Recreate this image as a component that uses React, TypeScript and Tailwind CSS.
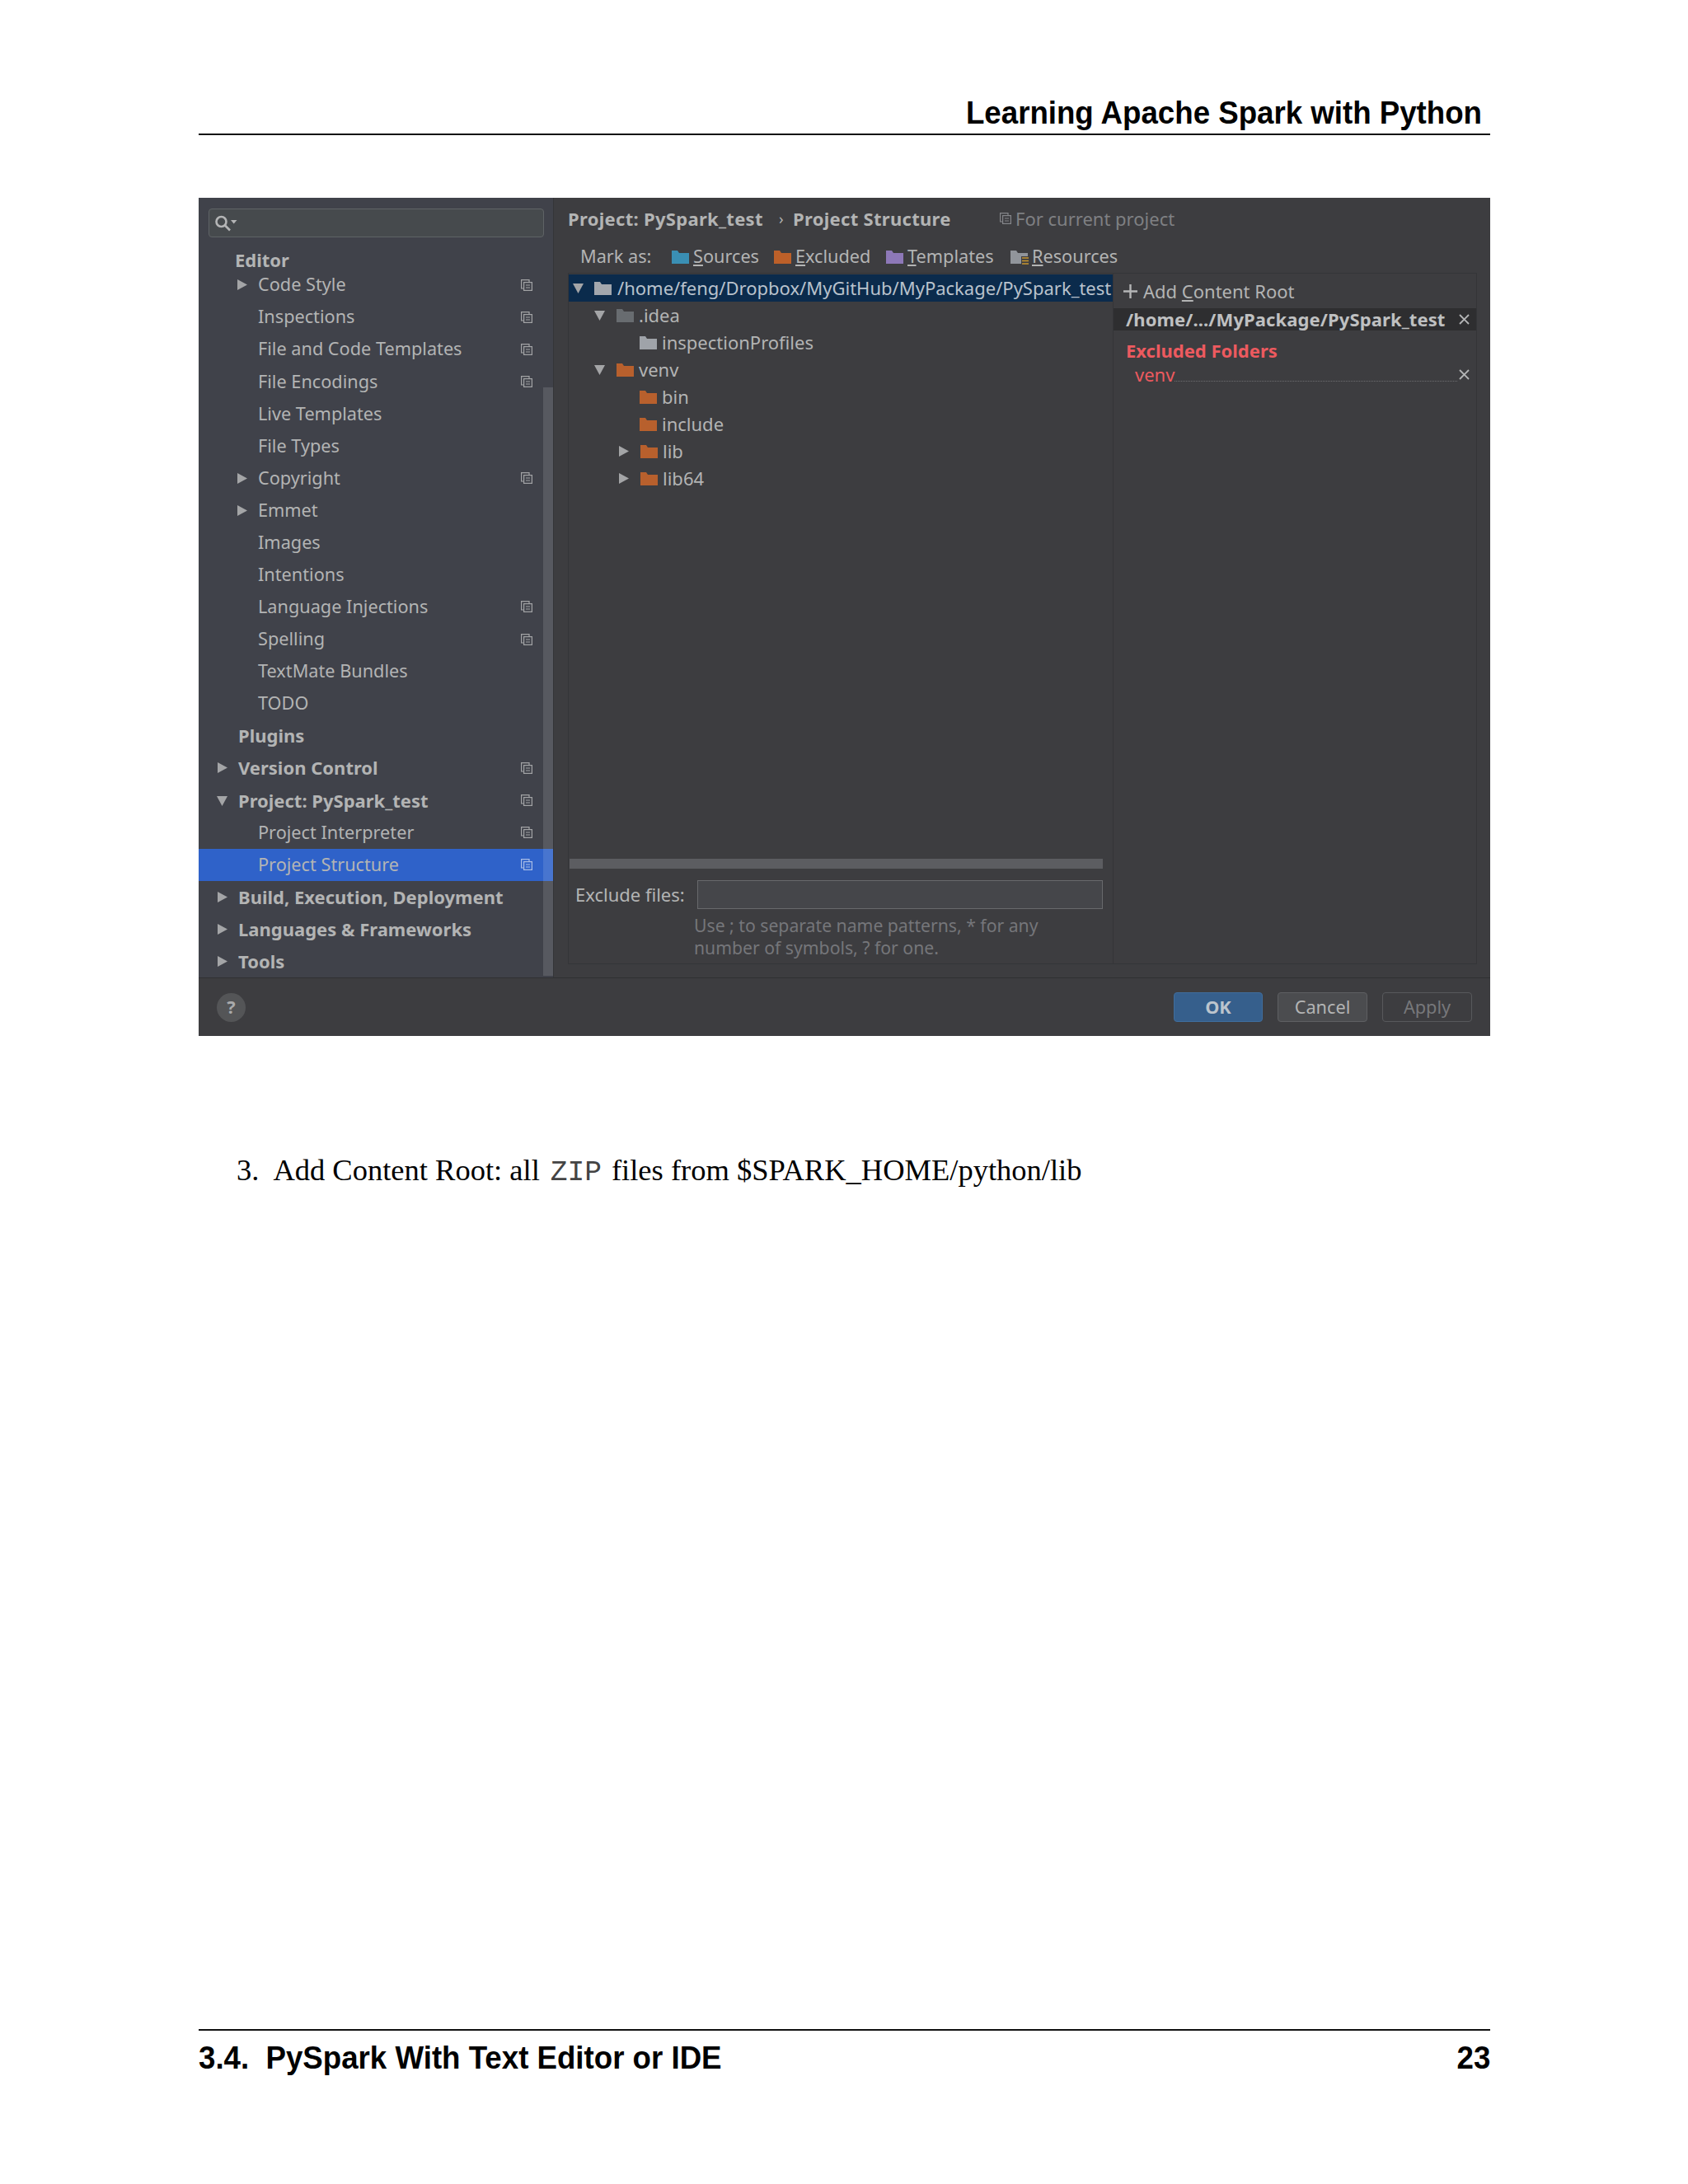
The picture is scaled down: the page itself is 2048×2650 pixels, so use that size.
import React from 'react';

const ui = "font-['Noto_Sans',sans-serif]";

const Arrow = ({ open, className = '' }: { open?: boolean; className?: string }) => (
    <svg width="13" height="13" viewBox="0 0 13 13" className={`shrink-0 ${className}`}>
        {open ? <polygon points="0,1 13,1 6.5,13" fill="#a4a5a7" /> : <polygon points="1,0 13,6.5 1,13" fill="#a4a5a7" />}
    </svg>
);

const Folder = ({ color, className = '' }: { color: string; className?: string }) => (
    <svg width="21" height="16" viewBox="0 0 21 16" className={`shrink-0 ${className}`}>
        <path d="M0 0H7L9 3H21V16H0Z" fill={color} />
    </svg>
);

const ResourceFolder = () => (
    <svg width="24" height="20" viewBox="0 0 24 20" className="shrink-0">
        <path d="M0 2H7L9 5H21V18H0Z" fill="#91959b" />
        <rect x="13" y="9" width="11" height="11" fill="#3d3d40" />
        <path d="M14 11H22M14 14.5H22M14 18H22" stroke="#c9972f" strokeWidth="1.6" />
    </svg>
);

const CopyIcon = ({ color = '#a2a3a5' }: { color?: string }) => (
    <svg width="14" height="14" viewBox="0 0 14 14" fill="none" stroke={color} strokeWidth="1.2" className="shrink-0">
        <path d="M3 11H.6V.6H10V3" />
        <rect x="3.6" y="3.6" width="9.8" height="9.8" />
        <path d="M6 7H11M6 10H11" />
    </svg>
);

const Close = ({ className = '' }: { className?: string }) => (
    <svg width="13" height="13" viewBox="0 0 13 13" stroke="#b4b5b6" strokeWidth="1.9" className={`shrink-0 ${className}`}>
        <path d="M1 1L12 12M12 1L1 12" />
    </svg>
);

type Item = { label: string; level: number; arrow?: 'open' | 'closed'; copy?: boolean; bold?: boolean; active?: boolean };

const items: Item[] = [
    { label: 'Code Style', level: 1, arrow: 'closed', copy: true },
    { label: 'Inspections', level: 1, copy: true },
    { label: 'File and Code Templates', level: 1, copy: true },
    { label: 'File Encodings', level: 1, copy: true },
    { label: 'Live Templates', level: 1 },
    { label: 'File Types', level: 1 },
    { label: 'Copyright', level: 1, arrow: 'closed', copy: true },
    { label: 'Emmet', level: 1, arrow: 'closed' },
    { label: 'Images', level: 1 },
    { label: 'Intentions', level: 1 },
    { label: 'Language Injections', level: 1, copy: true },
    { label: 'Spelling', level: 1, copy: true },
    { label: 'TextMate Bundles', level: 1 },
    { label: 'TODO', level: 1 },
    { label: 'Plugins', level: 0, bold: true },
    { label: 'Version Control', level: 0, arrow: 'closed', bold: true, copy: true },
    { label: 'Project: PySpark_test', level: 0, arrow: 'open', bold: true, copy: true },
    { label: 'Project Interpreter', level: 1, copy: true },
    { label: 'Project Structure', level: 1, copy: true, active: true },
    { label: 'Build, Execution, Deployment', level: 0, arrow: 'closed', bold: true },
    { label: 'Languages & Frameworks', level: 0, arrow: 'closed', bold: true },
    { label: 'Tools', level: 0, arrow: 'closed', bold: true },
];

const SideRow = ({ item }: { item: Item }) => (
    <div className={`flex items-center h-[39.1px] pr-[25px] ${item.level === 1 ? 'pl-[46px]' : 'pl-[22px]'} ${item.active ? 'bg-[#2f62c9]' : ''}`}>
        <div className="w-[26px] shrink-0">
            {item.arrow && <Arrow open={item.arrow === 'open'} />}
        </div>
        <span className={`flex-1 text-[#b3b4b4] ${item.bold ? 'text-[22px] font-bold' : 'text-[21.7px]'}`}>{item.label}</span>
        {item.copy && <CopyIcon color={item.active ? '#a9bde6' : '#a2a3a5'} />}
    </div>
);

const treeRows = [
    { label: '.idea', pad: 'pl-[31px]', arrow: 'open', color: '#686c70' },
    { label: 'inspectionProfiles', pad: 'pl-[86px]', color: '#9fa3a9' },
    { label: 'venv', pad: 'pl-[31px]', arrow: 'open', color: '#b8602d' },
    { label: 'bin', pad: 'pl-[86px]', color: '#b8602d' },
    { label: 'include', pad: 'pl-[86px]', color: '#b8602d' },
    { label: 'lib', pad: 'pl-[60px]', arrow: 'closed', color: '#b8602d' },
    { label: 'lib64', pad: 'pl-[60px]', arrow: 'closed', color: '#b8602d' },
];

const App = () => {
    return (
        <div className="w-[2048px] h-[2650px] bg-white flex flex-col pl-[241px] pr-[240px]">
            <div className="h-[164px] shrink-0 flex items-end justify-end pr-[10px] pb-[2px] border-b-2 border-[#111]">
                <span className="origin-right scale-x-[0.94] font-['Liberation_Sans',sans-serif] font-bold text-[39px] leading-[46px] text-black whitespace-nowrap">Learning Apache Spark with Python</span>
            </div>

            <div className={`mt-[76px] h-[1017px] shrink-0 flex flex-col bg-[#3d3d40] ${ui}`}>
                <div className="flex h-[947px] border-b border-[#2f3032]">
                    {/* left settings tree */}
                    <div className="relative w-[431px] shrink-0 bg-[#40424a] border-r border-[#343538] pt-[13px]">
                        <div className="mx-[12px] h-[35px] w-[407px] rounded-[4px] border border-[#5f6366] bg-[#464a4d] flex items-center pl-[6px]">
                            <svg width="28" height="22" viewBox="0 0 28 22" fill="none" stroke="#b4b5b6" strokeWidth="2.6">
                                <circle cx="8.5" cy="9" r="6" />
                                <path d="M13 13.5L19 19.5" />
                                <polygon points="20,7 27.5,7 23.7,11.5" fill="#b4b5b6" stroke="none" />
                            </svg>
                        </div>
                        <div className="h-[25px] mt-[13px] pt-[3px] pl-[44px] flex items-center text-[22px] font-bold text-[#b3b4b4]">Editor</div>
                        {items.map((item) => (
                            <SideRow key={item.label} item={item} />
                        ))}
                        <div className="absolute right-0 top-[230px] bottom-[2px] w-[12px] bg-[#ffffff1f]" />
                    </div>

                    {/* project structure */}
                    <div className="flex-1 min-w-0 flex flex-col">
                        <div className="h-[50px] mb-[2px] shrink-0 flex items-center pl-[17px] text-[22px] text-[#b3b4b4] whitespace-nowrap">
                            <span className="font-bold w-[236px] tracking-[0.3px]">Project: PySpark_test</span>
                            <span className="w-[37px] pl-[20px] text-[18px]">›</span>
                            <span className="font-bold w-[251px] tracking-[0.3px]">Project Structure</span>
                            <CopyIcon color="#85868a" />
                            <span className="ml-[5px] text-[#7f8083]">For current project</span>
                        </div>
                        <div className="h-[39px] shrink-0 flex items-center pl-[32px] text-[21.7px] text-[#b3b4b4] whitespace-nowrap">
                            <span className="w-[111px]">Mark as:</span>
                            <Folder color="#3a8fb4" />
                            <span className="ml-[5px] w-[98px]"><u>S</u>ources</span>
                            <Folder color="#bd6029" />
                            <span className="ml-[5px] w-[110px]"><u>E</u>xcluded</span>
                            <Folder color="#8d78b8" />
                            <span className="ml-[5px] w-[125px]"><u>T</u>emplates</span>
                            <ResourceFolder />
                            <span className="ml-[2px]"><u>R</u>esources</span>
                        </div>

                        <div className="flex ml-[17px] mr-[16px] flex-1 min-h-0 mb-[16px] border border-[#343538]">
                            <div className="w-[661px] shrink-0 flex flex-col pt-[1px] border-r border-[#343538]">
                                <div className="h-[33px] shrink-0 flex items-center pl-[5px] bg-[#0b2b4c] text-[22px] text-[#b9c2cc] overflow-hidden whitespace-nowrap">
                                    <Arrow open />
                                    <Folder color="#a3a7ad" className="ml-[13px]" />
                                    <span className="ml-[7px]">/home/feng/Dropbox/MyGitHub/MyPackage/PySpark_test</span>
                                </div>
                                {treeRows.map((row) => (
                                    <div key={row.label} className={`h-[33px] shrink-0 flex items-center text-[22px] text-[#b3b4b4] ${row.pad}`}>
                                        {row.arrow && <Arrow open={row.arrow === 'open'} className="mr-[14px]" />}
                                        <Folder color={row.color} />
                                        <span className="ml-[6px]">{row.label}</span>
                                    </div>
                                ))}
                                <div className="mt-auto ml-[1px] mr-[12px] h-[12px] bg-[#5c5d61]" />
                                <div className="flex items-center h-[35px] shrink-0 mt-[14px] pl-[8px] pr-[12px]">
                                    <span className="text-[22px] text-[#b3b4b4] whitespace-nowrap">Exclude files:</span>
                                    <div className="ml-auto w-[492px] h-full border border-[#68696c] bg-[#45464a]" />
                                </div>
                                <div className="pl-[152px] pt-[6px] h-[66px] shrink-0 text-[21.2px] leading-[27px] text-[#75767a] whitespace-nowrap">
                                    <div>Use ; to separate name patterns, * for any</div>
                                    <div>number of symbols, ? for one.</div>
                                </div>
                            </div>

                            <div className="flex-1 min-w-0 flex flex-col text-[22px]">
                                <div className="h-[42px] shrink-0 flex items-center pl-[12px] text-[#b3b4b4]">
                                    <svg width="17" height="17" viewBox="0 0 17 17" stroke="#b4b5b6" strokeWidth="2.4" className="mr-[7px] shrink-0">
                                        <path d="M8.5 0V17M0 8.5H17" />
                                    </svg>
                                    <span>Add <u>C</u>ontent Root</span>
                                </div>
                                <div className="h-[27px] shrink-0 flex items-center pl-[15px] pr-[8px] bg-[#2e2e30] font-bold text-[#bfc0c1]">
                                    <span className="flex-1 whitespace-nowrap tracking-[0.1px]">/home/.../MyPackage/PySpark_test</span>
                                    <Close />
                                </div>
                                <div className="mt-[10px] h-[28px] shrink-0 flex items-center pl-[15px] font-bold text-[#ed5a5f]">Excluded Folders</div>
                                <div className="h-[30px] shrink-0 flex items-center pl-[26px] pr-[8px] text-[#ed5a5f]">
                                    <span>venv</span>
                                    <div className="flex-1 self-end mb-[6px] mr-[2px] border-b border-dotted border-[#6d6e71]" />
                                    <Close />
                                </div>
                            </div>
                        </div>
                    </div>
                </div>

                {/* dialog buttons */}
                <div className="flex-1 flex items-center pl-[22px] pr-[22px] text-[21.7px]">
                    <div className="w-[35px] h-[35px] rounded-full bg-[#545557] flex items-center justify-center font-bold text-[#a9aaab]">?</div>
                    <button className="ml-auto w-[108px] h-[36px] rounded-[4px] border border-[#3f6d9c] bg-[#365f8c] font-bold text-[#bcc4cc]">OK</button>
                    <button className="ml-[18px] w-[109px] h-[36px] rounded-[4px] border border-[#5e5f62] bg-[#4b4c4f] text-[#b3b4b4]">Cancel</button>
                    <button className="ml-[18px] w-[109px] h-[36px] rounded-[4px] border border-[#58595c] text-[#77787b]">Apply</button>
                </div>
            </div>

            <div className="mt-[140px] pl-[46px] flex items-baseline font-['Liberation_Serif',serif] text-[36.5px] leading-[46px] text-black whitespace-nowrap">
                <span>3.</span>
                <span className="ml-[17px]">Add Content Root: all</span>
                <span className="ml-[13px] font-['Liberation_Mono',monospace] text-[34.5px] text-[#444]">ZIP</span>
                <span className="ml-[12px]">files from $SPARK_HOME/python/lib</span>
            </div>

            <div className="mt-auto mb-[130px] border-t-2 border-[#111] pt-[10px] flex justify-between font-['Liberation_Sans',sans-serif] font-bold text-[39px] leading-[46px] text-black whitespace-nowrap">
                <span className="origin-left scale-x-[0.94]">3.4.&nbsp;&nbsp;PySpark With Text Editor or IDE</span>
                <span className="origin-right scale-x-[0.94]">23</span>
            </div>
        </div>
    );
};

export default App;
